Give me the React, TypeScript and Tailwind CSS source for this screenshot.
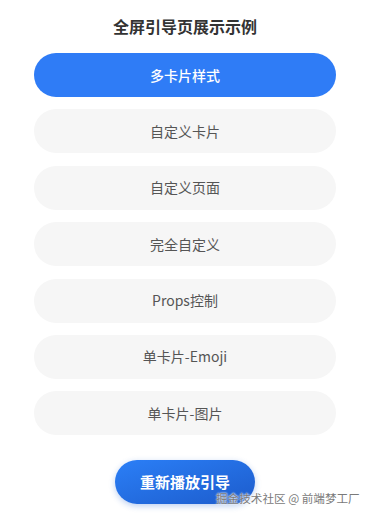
import React, { useState } from 'react';

const ITEMS = ['多卡片样式', '自定义卡片', '自定义页面', '完全自定义', 'Props控制', '单卡片-Emoji', '单卡片-图片'];

function App() {
  const [active, setActive] = useState(0);

  return (
    <div
      className="relative w-[373px] h-[517px] bg-white overflow-hidden"
      style={{ fontFamily: '"Noto Sans CJK SC", "Noto Sans", sans-serif' }}
    >
      <div className="flex flex-col items-center pt-[14px] pr-[3px]">
        <h1 className="text-[16px] leading-[24px] font-bold text-[#333333]">全屏引导页展示示例</h1>

        <div className="flex flex-col gap-[12.4px] mt-[15px] w-[302px]">
          {ITEMS.map((label, i) => (
            <button
              key={label}
              onClick={() => setActive(i)}
              className={`h-[44px] rounded-full text-[14px] ${
                active === i ? 'bg-[#2f7cf6] text-white font-medium' : 'bg-[#f6f6f6] text-[#555555]'
              }`}
            >
              {label}
            </button>
          ))}
        </div>

        <button className="mt-[25px] w-[140px] h-[44px] rounded-full bg-gradient-to-br from-[#2b7ff7] to-[#1d5ccc] text-white text-[15px] font-bold shadow-[0_2px_6px_rgba(30,95,210,0.3)]">
          重新播放引导
        </button>
      </div>

      <div
        className="absolute left-[216px] top-[490px] text-[11.6px] leading-[16px] text-[#7a7a7a] whitespace-nowrap"
        style={{ textShadow: '0 0 2px #ffffff, 0 0 2px #ffffff' }}
      >
        掘金技术社区 @ 前端梦工厂
      </div>
    </div>
  );
}

export default App;
